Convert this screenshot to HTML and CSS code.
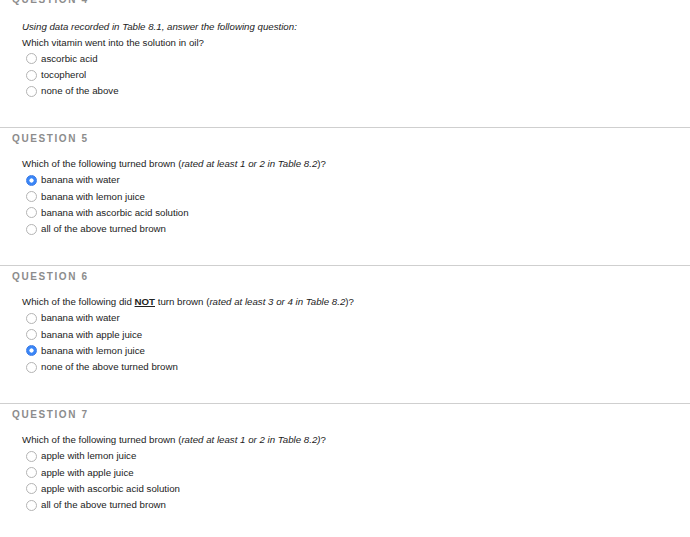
FILE: index.html
```html
<!DOCTYPE html>
<html>
<head>
<meta charset="utf-8">
<link rel="stylesheet" href="styles.css">
</head>
<body>
<div class="page">
  <section class="q first">
    <h2 class="qh">QUESTION 4</h2>
    <div class="qbody">
      <p class="qt"><i>Using data recorded in Table 8.1, answer the following question:</i></p>
      <p class="qt">Which vitamin went into the solution in oil?</p>
      <ul class="opts">
        <li><span class="radio"></span>ascorbic acid</li>
        <li><span class="radio"></span>tocopherol</li>
        <li><span class="radio"></span>none of the above</li>
      </ul>
    </div>
  </section>
  <section class="q">
    <h2 class="qh">QUESTION 5</h2>
    <div class="qbody">
      <p class="qt">Which of the following turned brown (<i>rated at least 1 or 2 in Table 8.2</i>)?</p>
      <ul class="opts">
        <li><span class="radio on"></span>banana with water</li>
        <li><span class="radio"></span>banana with lemon juice</li>
        <li><span class="radio"></span>banana with ascorbic acid solution</li>
        <li><span class="radio"></span>all of the above turned brown</li>
      </ul>
    </div>
  </section>
  <section class="q">
    <h2 class="qh">QUESTION 6</h2>
    <div class="qbody">
      <p class="qt">Which of the following did <b><u>NOT</u></b> turn brown (<i>rated at least 3 or 4 in Table 8.2</i>)?</p>
      <ul class="opts">
        <li><span class="radio"></span>banana with water</li>
        <li><span class="radio"></span>banana with apple juice</li>
        <li><span class="radio on"></span>banana with lemon juice</li>
        <li><span class="radio"></span>none of the above turned brown</li>
      </ul>
    </div>
  </section>
  <section class="q">
    <h2 class="qh">QUESTION 7</h2>
    <div class="qbody">
      <p class="qt">Which of the following turned brown (<i>rated at least 1 or 2 in Table 8.2)</i>?</p>
      <ul class="opts">
        <li><span class="radio"></span>apple with lemon juice</li>
        <li><span class="radio"></span>apple with apple juice</li>
        <li><span class="radio"></span>apple with ascorbic acid solution</li>
        <li><span class="radio"></span>all of the above turned brown</li>
      </ul>
    </div>
  </section>
</div>
</body>
</html>
```
FILE: styles.css
```css
html, body {
  margin: 0;
  padding: 0;
  background: #fff;
}
body {
  font-family: "Liberation Sans", Arial, sans-serif;
  font-size: 9.7px;
  color: #222;
  width: 690px;
  height: 537px;
  overflow: hidden;
}
.page {
  margin-top: -11px;
}
.q {
  box-sizing: border-box;
  border-top: 1px solid #cfcfcf;
  height: 138px;
}
.q.first {
  border-top: none;
  height: 138px;
}
.qh {
  margin: 0;
  padding: 4px 0 0 12px;
  height: 14px;
  line-height: 14px;
  font-size: 10px;
  font-weight: bold;
  letter-spacing: 1.6px;
  color: #8c8c8c;
}
.qbody {
  padding: 10px 0 0 22px;
}
.q.first .qbody {
  padding-top: 11.5px;
}
.qt {
  margin: 0;
  line-height: 16px;
}
.opts {
  list-style: none;
  margin: 0;
  padding: 0 0 0 4px;
}
.opts li {
  display: flex;
  align-items: center;
  height: 16.4px;
  line-height: 16px;
}
.radio {
  width: 9px;
  height: 9px;
  border: 1px solid #b4b4b4;
  border-radius: 50%;
  margin-right: 4px;
  background: #fff;
  box-sizing: content-box;
  flex: none;
}
.radio.on {
  border-color: #3b7be6;
  background: radial-gradient(circle, #ffffff 0 1.8px, #3a86f7 2.4px);
}
```
